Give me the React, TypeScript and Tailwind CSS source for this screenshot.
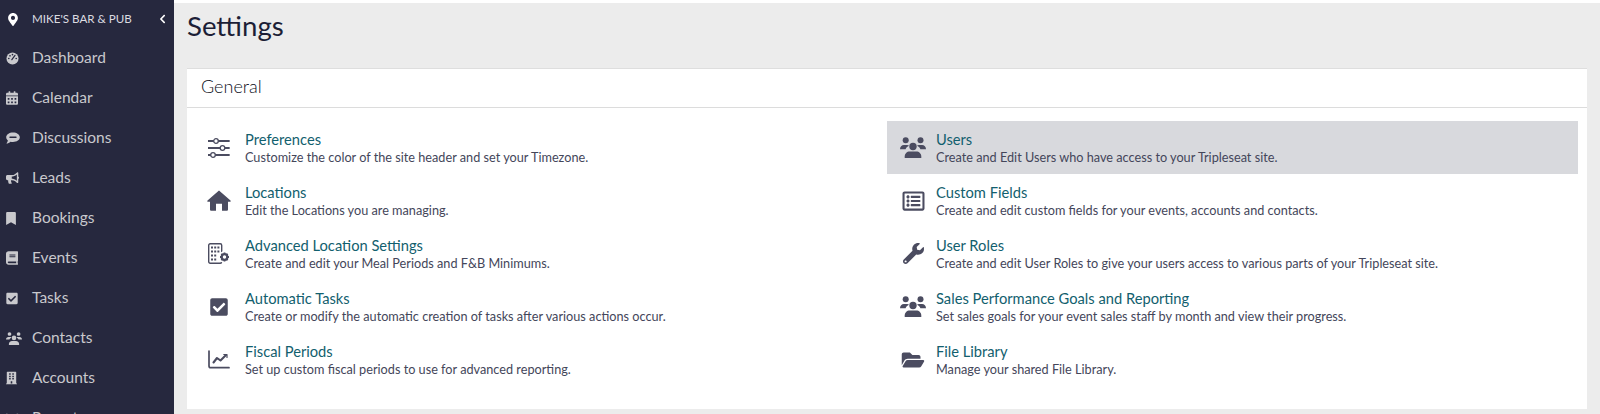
import React from "react";
import {
  FaMapMarkerAlt, FaChevronLeft, FaCalendarAlt, FaBullhorn, FaBookmark, FaBook,
  FaCheckSquare, FaBuilding, FaRegListAlt, FaWrench, FaFolderOpen, FaChartBar,
} from "react-icons/fa";

const UsersIcon = ({ className }: { className?: string }) => (
  <svg viewBox="0 0 26 21" className={className} fill="currentColor">
    <circle cx="5.700" cy="3.200" r="3" />
    <circle cx="20.500" cy="3.200" r="3" />
    <circle cx="13" cy="9.500" r="3.700" />
    <path d="M0 12.300c0-2.600 1.600-4.300 4-4.300h3.200c.8 0 1.300.3 1.800.7-1.800 1-3 2.100-3.400 3.600z" />
    <path d="M26 12.300c0-2.600-1.600-4.300-4-4.300h-3.200c-.8 0-1.300.3-1.800.7 1.800 1 3 2.100 3.400 3.600z" />
    <path d="M4.700 21v-1.400c0-3 2.200-5.100 5-5.100h6.600c2.800 0 5 2.100 5 5.100V21z" />
  </svg>
);

const Sliders = () => (
  <svg viewBox="0 0 22 22" className="h-[22px] w-[22px]" fill="#ffffff" stroke="#4b4c60">
    <path d="M0 4h21M0 11h21M0 18h21" strokeWidth="1.800" strokeLinecap="round" />
    <circle cx="8" cy="4" r="2.300" strokeWidth="1.300" />
    <circle cx="14.500" cy="11" r="2.300" strokeWidth="1.300" />
    <circle cx="5" cy="18" r="2.300" strokeWidth="1.300" />
  </svg>
);

const HomeIcon = () => (
  <svg viewBox="0 0 24 21" className="h-[21px] w-[24px]" fill="#4b4c60">
    <path d="M12 0.500 23.500 10.500c.5.500.2 1.300-.5 1.300h-2v7.700c0 .8-.6 1.300-1.300 1.300H15v-7H9v7H4.300c-.7 0-1.300-.5-1.300-1.300v-7.700H1c-.7 0-1-.8-.5-1.300z" />
  </svg>
);

const ChartIcon = () => (
  <svg viewBox="0 0 22 19" className="h-[19px] w-[22px]" fill="none" stroke="#4b4c60" strokeLinecap="round" strokeLinejoin="round">
    <path d="M1 1v15c0 1 .7 1.700 1.700 1.700H21" strokeWidth="1.700" />
    <path d="M5.500 12.500 9 8l3.500 2.500L18 5" strokeWidth="2.100" />
    <path d="M15.800 4.500H19v3" strokeWidth="1.200" />
  </svg>
);

const BuildingGear = () => (
  <svg viewBox="0 0 22 21" className="h-[21px] w-[22px]" fill="none">
    <rect x="0.700" y="0.700" width="13" height="19.500" rx="1.500" stroke="#4b4c60" strokeWidth="1.400" />
    <g fill="#4b4c60">
      <rect x="3" y="3.500" width="2" height="2" /><rect x="6.200" y="3.500" width="2" height="2" /><rect x="9.400" y="3.500" width="2" height="2" />
      <rect x="3" y="7.500" width="2" height="2" /><rect x="6.200" y="7.500" width="2" height="2" /><rect x="9.400" y="7.500" width="2" height="2" />
      <rect x="3" y="11.500" width="2" height="2" /><rect x="6.200" y="11.500" width="2" height="2" />
      <rect x="3" y="15.500" width="2" height="2" /><rect x="6.200" y="15.500" width="2" height="2" />
    </g>
    <circle cx="16.500" cy="14" r="6" fill="#ffffff" />
    <circle cx="16.500" cy="14" r="2.800" stroke="#4b4c60" strokeWidth="2.200" />
    <path d="M16.500 9.500v2M16.500 16.500v2M12 14h2M19 14h2M13.300 10.800l1.400 1.400M18.300 15.800l1.400 1.400M13.300 17.200l1.400-1.400M18.300 12.200l1.400-1.400" stroke="#4b4c60" strokeWidth="1.800" />
  </svg>
);

const GaugeIcon = ({ className }: { className?: string }) => (
  <svg viewBox="0 0 14 14" className={className}>
    <circle cx="7" cy="7" r="6.500" fill="currentColor" />
    <path d="M6.300 8.300 9.700 3.600" stroke="#26283e" strokeWidth="1.300" strokeLinecap="round" />
    <circle cx="3" cy="7" r=".9" fill="#26283e" />
    <circle cx="4.300" cy="4" r=".9" fill="#26283e" />
    <circle cx="7" cy="2.800" r=".9" fill="#26283e" />
    <circle cx="11" cy="7" r=".9" fill="#26283e" />
  </svg>
);

const BubbleIcon = ({ className }: { className?: string }) => (
  <svg viewBox="0 0 14 12" className={className}>
    <path d="M7 .5c3.800 0 6.800 2.100 6.800 4.800S10.800 10 7 10c-.9 0-1.700-.1-2.500-.3C3.400 10.700 2 11.500.4 11.500c.8-.8 1.300-1.700 1.500-2.900C.9 7.700.2 6.600.2 5.300.2 2.600 3.200.5 7 .5z" fill="currentColor" />
    <path d="M4 5.200h6" stroke="#26283e" strokeWidth="1.400" strokeLinecap="round" />
  </svg>
);

const nav = [
  ["Dashboard", GaugeIcon, "h-[13px] w-[13px]"],
  ["Calendar", FaCalendarAlt, "h-[14px] w-[12px]"],
  ["Discussions", BubbleIcon, "h-[12px] w-[14px]"],
  ["Leads", FaBullhorn, "h-[12px] w-[13px]"],
  ["Bookings", FaBookmark, "h-[13px] w-[10px]"],
  ["Events", FaBook, "h-[14px] w-[12px]"],
  ["Tasks", FaCheckSquare, "h-[13px] w-[12px]"],
  ["Contacts", UsersIcon, "h-[13px] w-[16px]"],
  ["Accounts", FaBuilding, "h-[14px] w-[11px]"],
  ["Reports", FaChartBar, "h-[13px] w-[13px]"],
] as const;

type Item = { t: string; d: string; i: React.ReactNode; active?: boolean };
const c = "text-[#4b4c60]";
const left: Item[] = [
  { t: "Preferences", d: "Customize the color of the site header and set your Timezone.", i: <Sliders /> },
  { t: "Locations", d: "Edit the Locations you are managing.", i: <HomeIcon /> },
  { t: "Advanced Location Settings", d: "Create and edit your Meal Periods and F&B Minimums.", i: <BuildingGear /> },
  { t: "Automatic Tasks", d: "Create or modify the automatic creation of tasks after various actions occur.", i: <FaCheckSquare className={`h-[20px] w-[20px] ${c}`} /> },
  { t: "Fiscal Periods", d: "Set up custom fiscal periods to use for advanced reporting.", i: <ChartIcon /> },
];
const right: Item[] = [
  { t: "Users", d: "Create and Edit Users who have access to your Tripleseat site.", i: <UsersIcon className={`h-[21px] w-[26px] ${c}`} />, active: true },
  { t: "Custom Fields", d: "Create and edit custom fields for your events, accounts and contacts.", i: <FaRegListAlt className={`h-[22px] w-[23px] ${c}`} /> },
  { t: "User Roles", d: "Create and edit User Roles to give your users access to various parts of your Tripleseat site.", i: <FaWrench className={`h-[21px] w-[21px] ${c}`} /> },
  { t: "Sales Performance Goals and Reporting", d: "Set sales goals for your event sales staff by month and view their progress.", i: <UsersIcon className={`h-[21px] w-[26px] ${c}`} /> },
  { t: "File Library", d: "Manage your shared File Library.", i: <FaFolderOpen className={`h-[20px] w-[24px] ${c}`} /> },
];

function Row({ item, side }: { item: Item; side: "l" | "r" }) {
  return (
    <div className={`flex h-[53px] items-center ${side === "l" ? "pl-[18px]" : "pl-[12px]"} ${item.active ? "bg-[#d8d9dd]" : ""}`}>
      <div className="flex w-[28px] shrink-0 justify-center">{item.i}</div>
      <div className={`min-w-0 ${side === "l" ? "ml-[12px]" : "ml-[9px]"}`}>
        <div className="text-[14.700px] leading-[18px] text-[#12606e]">{item.t}</div>
        <div className="mt-[1px] text-[12.700px] leading-[16px] text-[#44465a]">{item.d}</div>
      </div>
    </div>
  );
}

export default function App() {
  return (
    <div className="flex h-[414px] w-[1600px] overflow-hidden bg-[#ececec] font-['Lato','Noto_Sans',sans-serif]">
      <aside className="w-[174px] shrink-0 overflow-hidden bg-[#26283e] text-[#c9c9cd]">
        <div className="flex h-[38px] items-center pr-[8px] pl-[8px]">
          <FaMapMarkerAlt className="h-[13px] w-[10px] text-white" />
          <span className="ml-[14px] flex-1 text-[11.600px] text-[#dcdce0]">MIKE'S BAR &amp; PUB</span>
          <FaChevronLeft className="h-[10px] w-[7px] text-white" />
        </div>
        <nav>
          {nav.map(([label, Icon, size]) => (
            <div key={label} className="flex h-[40px] items-center pl-[6px]">
              <div className="flex w-[14px] justify-start"><Icon className={`${size} shrink-0`} /></div>
              <span className="ml-[12px] text-[15.500px]">{label}</span>
            </div>
          ))}
        </nav>
      </aside>
      <main className="min-w-0 flex-1 border-t-[3px] border-white">
        <div className="px-[13px]">
          <h1 className="flex h-[65px] items-start pt-[6px] text-[27.600px] leading-[34px] text-[#1c1e36]">Settings</h1>
          <section className="h-[341px] border-t border-[#dedede] bg-white">
            <div className="flex h-[39px] items-center border-b border-[#dcdcdc] pb-[4px] pl-[14px] text-[18px] font-light text-[#0e1022]">General</div>
            <div className="grid grid-cols-[700px_691px] pt-[13px]">
              <div>{left.map((x) => <Row key={x.t} item={x} side="l" />)}</div>
              <div>{right.map((x) => <Row key={x.t} item={x} side="r" />)}</div>
            </div>
          </section>
        </div>
      </main>
    </div>
  );
}
